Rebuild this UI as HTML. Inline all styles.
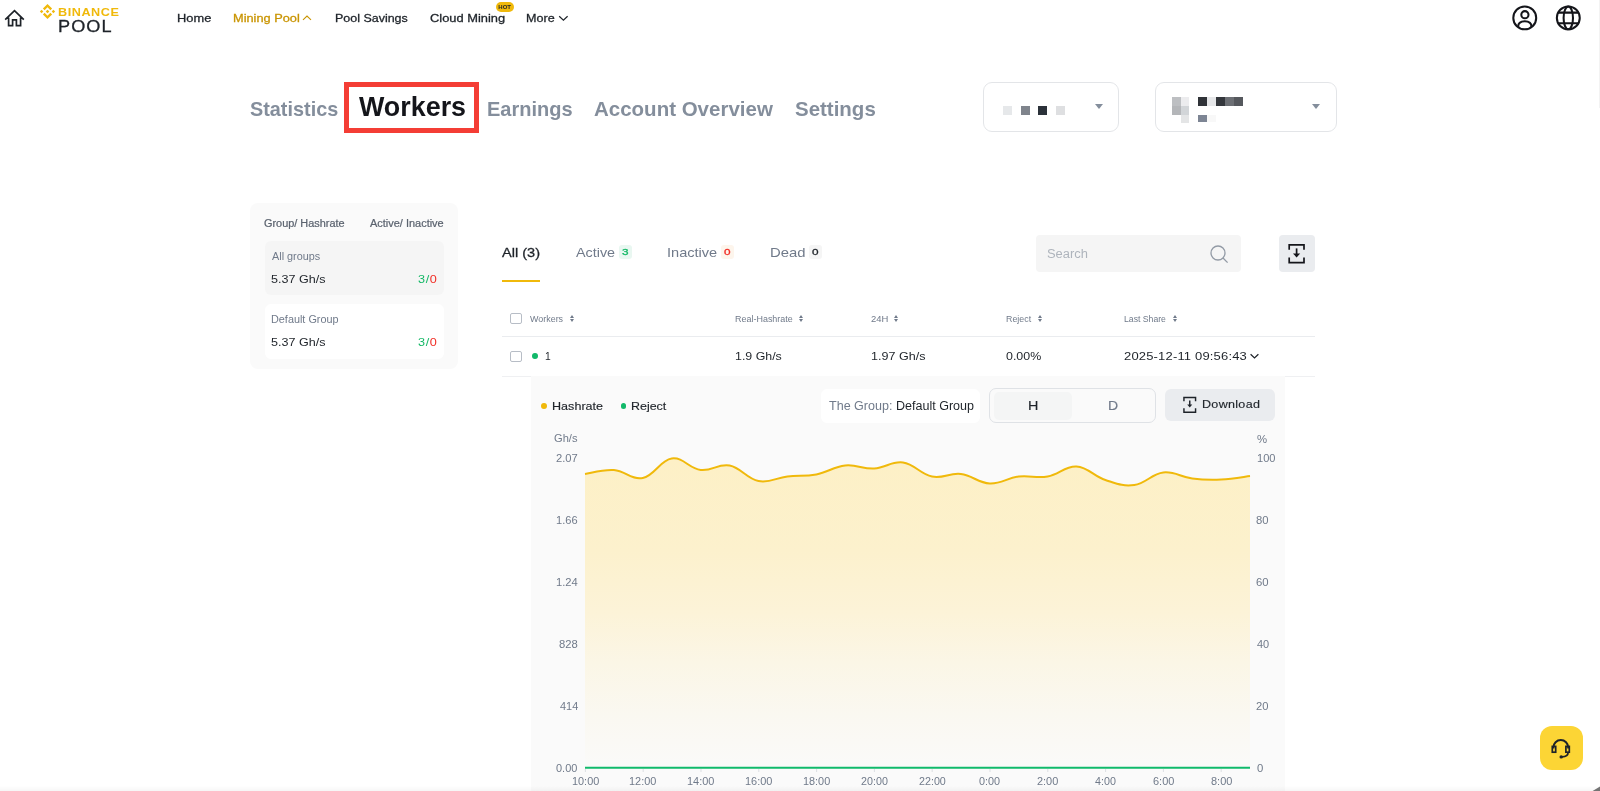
<!DOCTYPE html>
<html lang="en">
<head>
<meta charset="utf-8">
<title>Binance Pool - Workers</title>
<style>
*{box-sizing:border-box;margin:0;padding:0}
html,body{width:1600px;height:791px;overflow:hidden;background:#fff}
body{position:relative;font-family:"Liberation Sans",Arial,sans-serif;color:#1e2329}
.root{position:absolute;left:0;top:0;width:1600px;height:791px;will-change:transform}
.abs{position:absolute;white-space:nowrap}
svg{position:absolute;overflow:visible}
.yl{font-size:10.5px;color:#707a8a;line-height:12px;text-align:right;width:40px;left:537.6px}
.yr{font-size:10.5px;color:#707a8a;line-height:12px;left:1257px}
.xl{font-size:10.5px;color:#707a8a;line-height:12px;top:774.6px;width:40px;text-align:center}
.sort{position:absolute;width:0;height:0;border-left:2.5px solid transparent;border-right:2.500px solid transparent}
.cb{position:absolute;width:11.6px;height:10.6px;border:1px solid #b7bdc6;border-radius:2px;background:#fff}
.m{-webkit-text-stroke:0.25px currentColor}
</style>
</head>
<body>
<div class="root">
<!-- ===== top nav ===== -->
<svg style="left:0;top:0" width="130" height="40" viewBox="0 0 130 40">
  <path d="M5.2 19.6 L14.5 10.6 L23.8 19.6 M8.6 17.4 V25.6 H12.6 V19.8 H16.4 V25.6 H20.6 V17.4" fill="none" stroke="#1e2329" stroke-width="1.7" stroke-linejoin="miter"/>
  <g fill="#f0b90b" transform="translate(47.5 11.5)">
    <path d="M0 -7.6 L4.6 -3 L2.9 -1.3 L0 -4.2 L-2.9 -1.3 L-4.6 -3 Z"/>
    <path d="M0 7.6 L4.6 3 L2.9 1.3 L0 4.2 L-2.9 1.3 L-4.6 3 Z"/>
    <path d="M-7.6 0 L-5.9 -1.7 L-4.2 0 L-5.9 1.7 Z"/>
    <path d="M7.6 0 L5.9 -1.7 L4.2 0 L5.9 1.7 Z"/>
    <path d="M0 -1.8 L1.8 0 L0 1.8 L-1.8 0 Z"/>
  </g>
</svg>
<svg style="left:302px;top:14px" width="10" height="8" viewBox="0 0 10 8"><path d="M1 5.8 L5 2 L9 5.800" fill="none" stroke="#c99400" stroke-width="1.1"/></svg>
<div class="abs" style="left:495.6px;top:2.2px;width:18.2px;height:10px;border-radius:5px;background:#f0b90b"></div>
<div class="abs" id="hot" style="left:495.6px;top:2.2px;width:18.2px;height:10px;color:#1e2329;font-size:6px;line-height:10px;text-align:center;font-weight:700">HOT</div>
<svg style="left:557.6px;top:14px" width="11" height="8" viewBox="0 0 11 8"><path d="M1.2 2.2 L5.4 6.1 L9.6 2.200" fill="none" stroke="#1e2329" stroke-width="1.2"/></svg>

<svg style="left:1510px;top:4px" width="74" height="28" viewBox="0 0 74 28">
  <g fill="none" stroke="#14151a" stroke-width="2.05">
    <circle cx="14.75" cy="13.9" r="11.45"/>
    <circle cx="14.9" cy="10.7" r="3.600"/>
    <path d="M8.1 22.9 C8.100 19.1 10.800 17.300 14.8 17.300 C18.8 17.3 21.500 19.1 21.500 22.900"/>
    <circle cx="58.3" cy="13.9" r="11.45"/>
    <ellipse cx="58.3" cy="13.9" rx="4.7" ry="11.45"/>
    <path d="M47.9 8.600 H68.7 M47.9 19.2 H68.7"/>
  </g>
</svg>

<!-- ===== main tabs ===== -->
<div class="abs" style="left:344px;top:82px;width:135px;height:51px;border:5px solid #f43d35"></div>

<!-- dropdowns -->
<div class="abs" style="left:983px;top:82px;width:136px;height:50px;border:1px solid #e3e5e8;border-radius:9px"></div>
<div class="abs" style="left:1002.5px;top:105.5px;width:9px;height:9px;background:#e6e8ea"></div>
<div class="abs" style="left:1020.5px;top:105.5px;width:9px;height:9px;background:#7f848c"></div>
<div class="abs" style="left:1038px;top:105.5px;width:9px;height:9px;background:#2b3139"></div>
<div class="abs" style="left:1056px;top:105.5px;width:9px;height:9px;background:#dedfe1"></div>
<div class="sort" style="left:1094.5px;top:104px;border-left-width:4px;border-right-width:4px;border-top:5px solid #848e9c"></div>

<div class="abs" style="left:1155px;top:82px;width:182px;height:50px;border:1px solid #e3e5e8;border-radius:9px"></div>
<div class="abs" style="left:1171.5px;top:97px;width:9px;height:9px;background:#bdbfc2"></div>
<div class="abs" style="left:1180.5px;top:97px;width:8.5px;height:9px;background:#ececee"></div>
<div class="abs" style="left:1171.5px;top:106px;width:9px;height:8.5px;background:#b4b6b9"></div>
<div class="abs" style="left:1180.5px;top:106px;width:8.5px;height:8.5px;background:#d2d5d8"></div>
<div class="abs" style="left:1180.5px;top:114.500px;width:8.500px;height:8px;background:#e4e5e6"></div>
<div class="abs" style="left:1198px;top:97px;width:9px;height:8.500px;background:#303338"></div>
<div class="abs" style="left:1207px;top:97px;width:9px;height:8.500px;background:#e6e7e9"></div>
<div class="abs" style="left:1216px;top:97px;width:9px;height:8.500px;background:#34373c"></div>
<div class="abs" style="left:1225px;top:97px;width:9px;height:8.500px;background:#6c6f74"></div>
<div class="abs" style="left:1234px;top:97px;width:8.5px;height:8.500px;background:#55585d"></div>
<div class="abs" style="left:1198px;top:114.500px;width:9px;height:7.5px;background:#7d8594"></div>
<div class="abs" style="left:1207px;top:114.500px;width:9px;height:7.5px;background:#f8f8f8"></div>
<div class="sort" style="left:1311.5px;top:104px;border-left-width:4px;border-right-width:4px;border-top:5px solid #848e9c"></div>

<!-- ===== left panel ===== -->
<div class="abs" style="left:249.8px;top:202.8px;width:208.2px;height:166.6px;background:#fafafa;border-radius:8px"></div>
<div class="abs" style="left:265px;top:241.2px;width:178.8px;height:53.8px;background:#f5f5f5;border-radius:6px"></div>
<div class="abs" style="left:264.6px;top:304.4px;width:179.2px;height:54.4px;background:#fff;border-radius:6px"></div>

<!-- ===== worker tabs ===== -->
<div class="abs" style="left:501.5px;top:280px;width:38px;height:2.4px;background:#f0b90b"></div>
<div class="abs" style="left:618.5px;top:245.3px;width:13.4px;height:14px;border-radius:3px;background:#e9f7f1"></div>
<div class="abs" style="left:721px;top:245.3px;width:13.4px;height:14px;border-radius:3px;background:#fdf5ec"></div>
<div class="abs" style="left:808.6px;top:245.3px;width:13.6px;height:14px;border-radius:3px;background:#f5f5f5"></div>

<!-- search -->
<div class="abs" style="left:1035.5px;top:235.2px;width:205px;height:36.6px;background:#f5f5f5;border-radius:4px"></div>
<svg style="left:1205.5px;top:240.5px" width="24" height="24" viewBox="0 0 24 24"><circle cx="12" cy="12" r="7" fill="none" stroke="#929aa5" stroke-width="1.3"/><path d="M17 17 L21.6 21.600" stroke="#929aa5" stroke-width="1.3"/></svg>
<div class="abs" style="left:1278.7px;top:235.2px;width:36.3px;height:36.6px;background:#eaecef;border-radius:4px"></div>
<svg style="left:1287px;top:243px" width="20" height="22" viewBox="0 0 20 22"><g fill="none" stroke="#14151a" stroke-width="1.700"><path d="M2.2 6.8 V1.8 H17 V6.8"/><path d="M2.2 14.6 V19.6 H17 V14.6"/><path d="M9.6 5.4 V12.6"/></g><path d="M6 10.4 H13.2 L9.6 14.4 Z" fill="#14151a"/></svg>

<!-- ===== table ===== -->
<div class="cb" style="left:510.3px;top:313.1px"></div>
<div class="sort" style="left:570.0px;top:314.8px;border-bottom:3.1px solid #707a8a"></div><div class="sort" style="left:570.0px;top:319.1px;border-top:3.1px solid #707a8a"></div>
<div class="sort" style="left:799.4px;top:314.8px;border-bottom:3.1px solid #707a8a"></div><div class="sort" style="left:799.4px;top:319.1px;border-top:3.1px solid #707a8a"></div>
<div class="sort" style="left:894.4px;top:314.8px;border-bottom:3.1px solid #707a8a"></div><div class="sort" style="left:894.4px;top:319.1px;border-top:3.1px solid #707a8a"></div>
<div class="sort" style="left:1038.0px;top:314.8px;border-bottom:3.1px solid #707a8a"></div><div class="sort" style="left:1038.0px;top:319.1px;border-top:3.1px solid #707a8a"></div>
<div class="sort" style="left:1172.8px;top:314.8px;border-bottom:3.1px solid #707a8a"></div><div class="sort" style="left:1172.8px;top:319.1px;border-top:3.1px solid #707a8a"></div>

<div class="abs" style="left:501.5px;top:335.8px;width:813.5px;height:1px;background:#eaecef"></div>
<div class="cb" style="left:510.3px;top:351px"></div>
<div class="abs" style="left:532.3px;top:353.4px;width:5.8px;height:5.8px;border-radius:50%;background:#12b96a"></div>
<svg style="left:1249px;top:352px" width="11" height="8" viewBox="0 0 11 8"><path d="M1.6 2.2 L5.5 6 L9.400 2.2" fill="none" stroke="#1e2329" stroke-width="1.2"/></svg>
<div class="abs" style="left:501.5px;top:375.900px;width:813.5px;height:1px;background:#eff0f2"></div>

<!-- ===== chart panel ===== -->
<div class="abs" style="left:531.3px;top:376.4px;width:753.8px;height:415px;background:#fafafa"></div>
<div class="abs" style="left:541.3px;top:403px;width:5.8px;height:5.8px;border-radius:50%;background:#f0b90b"></div>
<div class="abs" style="left:620.6px;top:403px;width:5.8px;height:5.8px;border-radius:50%;background:#12b96a"></div>

<div class="abs" style="left:821px;top:388.5px;width:159.3px;height:34.2px;background:#fff;border-radius:6px"></div>
<div class="abs" style="left:989.4px;top:388.1px;width:167.1px;height:34.6px;border:1px solid #dfe2e6;border-radius:7px;background:#fafafa"></div>
<div class="abs" style="left:994.4px;top:391.9px;width:78.1px;height:27.8px;border-radius:5px;background:#f4f5f5"></div>
<div class="abs" style="left:1165px;top:388.7px;width:110px;height:32.5px;background:#eaecef;border-radius:6px"></div>
<svg style="left:1182.4px;top:395.8px" width="15.5" height="17.700" viewBox="0 0 16 18"><g fill="none" stroke="#1e2329" stroke-width="1.5"><path d="M2 5.4 V1.4 H14 V5.4"/><path d="M2 12.400 V16.6 H14 V12.400"/><path d="M8 4.6 V10"/></g><path d="M5.4 8.6 H10.600 L8 11.800 Z" fill="#1e2329"/></svg>

<div class="abs" id="binance" style="left:57.82px;top:6.00px;font-size:11.30px;line-height:13px;letter-spacing:0.477px;transform:scaleX(1.1200);transform-origin:0 0;font-weight:700;color:#f0b90b">BINANCE</div>
<div class="abs" id="pool" style="left:57.70px;top:17.00px;font-size:16.20px;line-height:19px;letter-spacing:0.970px;transform:scaleX(1.1200);transform-origin:0 0;color:#1e2329;-webkit-text-stroke:0.3px #1e2329">POOL</div>
<div class="abs" id="n1" style="left:177.35px;top:11.00px;font-size:11.60px;line-height:14px;letter-spacing:0.000px;transform:scaleX(1.1086);transform-origin:0 0;color:#1e2329;-webkit-text-stroke:0.3px currentColor">Home</div>
<div class="abs" id="n2" style="left:232.69px;top:11.00px;font-size:11.60px;line-height:14px;letter-spacing:0.000px;transform:scaleX(1.1013);transform-origin:0 0;color:#c99400;-webkit-text-stroke:0.3px currentColor">Mining Pool</div>
<div class="abs" id="n3" style="left:334.68px;top:11.00px;font-size:11.60px;line-height:14px;letter-spacing:0.000px;transform:scaleX(1.0755);transform-origin:0 0;color:#1e2329;-webkit-text-stroke:0.3px currentColor">Pool Savings</div>
<div class="abs" id="n4" style="left:429.52px;top:11.00px;font-size:11.60px;line-height:14px;letter-spacing:0.000px;transform:scaleX(1.1100);transform-origin:0 0;color:#1e2329;-webkit-text-stroke:0.3px currentColor">Cloud Mining</div>
<div class="abs" id="n5" style="left:526.31px;top:11.00px;font-size:11.60px;line-height:14px;letter-spacing:0.000px;transform:scaleX(1.0850);transform-origin:0 0;color:#1e2329;-webkit-text-stroke:0.3px currentColor">More</div>
<div class="abs" id="t1" style="left:249.86px;top:97.00px;font-size:20.40px;line-height:24px;letter-spacing:0.000px;transform:scaleX(0.9729);transform-origin:0 0;font-weight:700;color:#848e9c">Statistics</div>
<div class="abs" id="t2" style="left:359.17px;top:91.00px;font-size:27.00px;line-height:32px;letter-spacing:0.000px;transform:scaleX(0.9951);transform-origin:0 0;font-weight:700;color:#14151a">Workers</div>
<div class="abs" id="t3" style="left:487.47px;top:97.00px;font-size:20.40px;line-height:24px;letter-spacing:0.000px;transform:scaleX(0.9814);transform-origin:0 0;font-weight:700;color:#848e9c">Earnings</div>
<div class="abs" id="t4" style="left:594.07px;top:97.00px;font-size:20.40px;line-height:24px;letter-spacing:0.000px;transform:scaleX(1.0051);transform-origin:0 0;font-weight:700;color:#848e9c">Account Overview</div>
<div class="abs" id="t5" style="left:795.14px;top:97.00px;font-size:20.40px;line-height:24px;letter-spacing:0.000px;transform:scaleX(1.0041);transform-origin:0 0;font-weight:700;color:#848e9c">Settings</div>
<div class="abs" id="lp1" style="left:263.87px;top:218.00px;font-size:10.00px;line-height:12px;letter-spacing:0.000px;transform:scaleX(1.0905);transform-origin:0 0;color:#5a626e;-webkit-text-stroke:0.2px currentColor">Group/ Hashrate</div>
<div class="abs" id="lp2" style="left:370.29px;top:218.00px;font-size:10.00px;line-height:12px;letter-spacing:0.000px;transform:scaleX(1.0955);transform-origin:0 0;color:#5a626e;-webkit-text-stroke:0.2px currentColor">Active/ Inactive</div>
<div class="abs" id="lp3" style="left:271.86px;top:251.00px;font-size:10.00px;line-height:12px;letter-spacing:0.000px;transform:scaleX(1.0845);transform-origin:0 0;color:#707a8a">All groups</div>
<div class="abs" id="lp4" style="left:271.25px;top:273.00px;font-size:11.30px;line-height:13px;letter-spacing:0.000px;transform:scaleX(1.1124);transform-origin:0 0;color:#1e2329">5.37 Gh/s</div>
<div class="abs" id="lp5" style="left:417.91px;top:273.00px;font-size:11.30px;line-height:13px;letter-spacing:0.558px;transform:scaleX(1.1200);transform-origin:0 0;color:#14b866">3/<span style="color:#f12c24">0</span></div>
<div class="abs" id="lp6" style="left:271.07px;top:314.00px;font-size:10.00px;line-height:12px;letter-spacing:0.000px;transform:scaleX(1.0846);transform-origin:0 0;color:#707a8a">Default Group</div>
<div class="abs" id="lp7" style="left:271.25px;top:336.00px;font-size:11.30px;line-height:13px;letter-spacing:0.000px;transform:scaleX(1.1124);transform-origin:0 0;color:#1e2329">5.37 Gh/s</div>
<div class="abs" id="lp8" style="left:417.91px;top:336.00px;font-size:11.30px;line-height:13px;letter-spacing:0.558px;transform:scaleX(1.1200);transform-origin:0 0;color:#14b866">3/<span style="color:#f12c24">0</span></div>
<div class="abs" id="w1" style="left:501.50px;top:245.00px;font-size:13.20px;line-height:16px;letter-spacing:0.000px;transform:scaleX(1.1050);transform-origin:0 0;color:#1e2329;-webkit-text-stroke:0.3px currentColor">All (3)</div>
<div class="abs" id="w2" style="left:575.64px;top:245.00px;font-size:13.50px;line-height:16px;letter-spacing:0.000px;transform:scaleX(1.0616);transform-origin:0 0;color:#707a8a">Active</div>
<div class="abs" id="w3" style="left:667.03px;top:245.00px;font-size:13.50px;line-height:16px;letter-spacing:0.000px;transform:scaleX(1.0792);transform-origin:0 0;color:#707a8a">Inactive</div>
<div class="abs" id="w4" style="left:770.25px;top:245.00px;font-size:13.50px;line-height:16px;letter-spacing:0.000px;transform:scaleX(1.0997);transform-origin:0 0;color:#707a8a">Dead</div>
<div class="abs" id="b1" style="left:622.15px;top:247.00px;font-size:9.00px;line-height:11px;letter-spacing:0.000px;transform:scaleX(1.3069);transform-origin:0 0;color:#14b866;-webkit-text-stroke:0.3px currentColor">3</div>
<div class="abs" id="b2" style="left:724.44px;top:247.00px;font-size:9.00px;line-height:11px;letter-spacing:0.000px;transform:scaleX(1.3052);transform-origin:0 0;color:#f12c24;-webkit-text-stroke:0.3px currentColor">0</div>
<div class="abs" id="b3" style="left:812.11px;top:247.00px;font-size:9.00px;line-height:11px;letter-spacing:0.000px;transform:scaleX(1.3052);transform-origin:0 0;color:#1e2329;-webkit-text-stroke:0.3px currentColor">0</div>
<div class="abs" id="srch" style="left:1047.19px;top:247.00px;font-size:12.00px;line-height:14px;letter-spacing:0.000px;transform:scaleX(1.0772);transform-origin:0 0;color:#aeb4bc">Search</div>
<div class="abs" id="h1" style="left:529.91px;top:314.00px;font-size:9.00px;line-height:11px;letter-spacing:0.000px;transform:scaleX(0.9919);transform-origin:0 0;color:#707a8a">Workers</div>
<div class="abs" id="h2" style="left:734.68px;top:314.00px;font-size:9.00px;line-height:11px;letter-spacing:0.000px;transform:scaleX(0.9963);transform-origin:0 0;color:#707a8a">Real-Hashrate</div>
<div class="abs" id="h3" style="left:871.08px;top:314.00px;font-size:9.00px;line-height:11px;letter-spacing:0.000px;transform:scaleX(1.0510);transform-origin:0 0;color:#707a8a">24H</div>
<div class="abs" id="h4" style="left:1006.16px;top:314.00px;font-size:9.00px;line-height:11px;letter-spacing:0.000px;transform:scaleX(0.9834);transform-origin:0 0;color:#707a8a">Reject</div>
<div class="abs" id="h5" style="left:1124.15px;top:314.00px;font-size:9.00px;line-height:11px;letter-spacing:0.000px;transform:scaleX(0.9635);transform-origin:0 0;color:#707a8a">Last Share</div>
<div class="abs" id="d1" style="left:545.04px;top:349.00px;font-size:11.60px;line-height:14px;letter-spacing:0.000px;transform:scaleX(0.8898);transform-origin:0 0;color:#1e2329">1</div>
<div class="abs" id="d2" style="left:735.42px;top:349.00px;font-size:11.60px;line-height:14px;letter-spacing:0.000px;transform:scaleX(1.0680);transform-origin:0 0;color:#1e2329">1.9 Gh/s</div>
<div class="abs" id="d3" style="left:870.65px;top:349.00px;font-size:11.60px;line-height:14px;letter-spacing:0.000px;transform:scaleX(1.0827);transform-origin:0 0;color:#1e2329">1.97 Gh/s</div>
<div class="abs" id="d4" style="left:1006.15px;top:349.00px;font-size:11.60px;line-height:14px;letter-spacing:0.000px;transform:scaleX(1.0707);transform-origin:0 0;color:#1e2329">0.00%</div>
<div class="abs" id="d5" style="left:1123.99px;top:349.00px;font-size:11.60px;line-height:14px;letter-spacing:0.158px;transform:scaleX(1.1200);transform-origin:0 0;color:#1e2329">2025-12-11 09:56:43</div>
<div class="abs" id="lg1" style="left:551.63px;top:400.00px;font-size:11.20px;line-height:13px;letter-spacing:0.030px;transform:scaleX(1.1200);transform-origin:0 0;color:#1e2329;-webkit-text-stroke:0.15px currentColor">Hashrate</div>
<div class="abs" id="lg2" style="left:631.07px;top:400.00px;font-size:11.20px;line-height:13px;letter-spacing:0.000px;transform:scaleX(1.1120);transform-origin:0 0;color:#1e2329;-webkit-text-stroke:0.15px currentColor">Reject</div>
<div class="abs" id="grp" style="left:828.56px;top:399.00px;font-size:12.00px;line-height:14px;letter-spacing:0.000px;transform:scaleX(1.0451);transform-origin:0 0;color:#707a8a">The Group: <span style="color:#1e2329">Default Group</span></div>
<div class="abs" id="hh" style="left:1027.71px;top:399.00px;font-size:12.30px;line-height:15px;letter-spacing:0.000px;transform:scaleX(1.1691);transform-origin:0 0;color:#1e2329;-webkit-text-stroke:0.15px currentColor">H</div>
<div class="abs" id="dd" style="left:1107.72px;top:399.00px;font-size:12.30px;line-height:15px;letter-spacing:0.000px;transform:scaleX(1.1379);transform-origin:0 0;color:#707a8a;-webkit-text-stroke:0.15px currentColor">D</div>
<div class="abs" id="dl" style="left:1201.97px;top:398.00px;font-size:11.20px;line-height:13px;letter-spacing:0.275px;transform:scaleX(1.1200);transform-origin:0 0;color:#1e2329;-webkit-text-stroke:0.15px currentColor">Download</div>
<div class="abs" id="u1" style="left:554.17px;top:432.00px;font-size:10.50px;line-height:13px;letter-spacing:0.000px;transform:scaleX(1.0590);transform-origin:0 0;color:#707a8a">Gh/s</div>
<div class="abs" id="y0" style="left:555.99px;top:452.00px;font-size:10.50px;line-height:13px;letter-spacing:0.000px;transform:scaleX(1.0657);transform-origin:0 0;color:#707a8a">2.07</div>
<div class="abs" id="r0" style="left:1257.06px;top:452.00px;font-size:10.50px;line-height:13px;letter-spacing:0.000px;transform:scaleX(1.0545);transform-origin:0 0;color:#707a8a">100</div>
<div class="abs" id="y1" style="left:556.01px;top:514.00px;font-size:10.50px;line-height:13px;letter-spacing:0.000px;transform:scaleX(1.0550);transform-origin:0 0;color:#707a8a">1.66</div>
<div class="abs" id="r1" style="left:1256.27px;top:514.00px;font-size:10.50px;line-height:13px;letter-spacing:0.000px;transform:scaleX(1.0743);transform-origin:0 0;color:#707a8a">80</div>
<div class="abs" id="y2" style="left:556.01px;top:576.00px;font-size:10.50px;line-height:13px;letter-spacing:0.000px;transform:scaleX(1.0671);transform-origin:0 0;color:#707a8a">1.24</div>
<div class="abs" id="r2" style="left:1255.93px;top:576.00px;font-size:10.50px;line-height:13px;letter-spacing:0.000px;transform:scaleX(1.0799);transform-origin:0 0;color:#707a8a">60</div>
<div class="abs" id="y3" style="left:558.83px;top:638.00px;font-size:10.50px;line-height:13px;letter-spacing:0.000px;transform:scaleX(1.0722);transform-origin:0 0;color:#707a8a">828</div>
<div class="abs" id="r3" style="left:1257.11px;top:638.00px;font-size:10.50px;line-height:13px;letter-spacing:0.000px;transform:scaleX(1.0472);transform-origin:0 0;color:#707a8a">40</div>
<div class="abs" id="y4" style="left:559.84px;top:700.00px;font-size:10.50px;line-height:13px;letter-spacing:0.000px;transform:scaleX(1.0408);transform-origin:0 0;color:#707a8a">414</div>
<div class="abs" id="r4" style="left:1256.13px;top:700.00px;font-size:10.50px;line-height:13px;letter-spacing:0.000px;transform:scaleX(1.0635);transform-origin:0 0;color:#707a8a">20</div>
<div class="abs" id="y5" style="left:556.03px;top:762.00px;font-size:10.50px;line-height:13px;letter-spacing:0.000px;transform:scaleX(1.0449);transform-origin:0 0;color:#707a8a">0.00</div>
<div class="abs" id="r5" style="left:1256.81px;top:762.00px;font-size:10.50px;line-height:13px;letter-spacing:0.000px;transform:scaleX(1.0810);transform-origin:0 0;color:#707a8a">0</div>
<div class="abs" id="pct" style="left:1256.75px;top:433.00px;font-size:10.50px;line-height:13px;letter-spacing:0.000px;transform:scaleX(1.0806);transform-origin:0 0;color:#707a8a">%</div>
<div class="abs" id="x0" style="left:571.96px;top:776.00px;font-size:10.00px;line-height:12px;letter-spacing:0.000px;transform:scaleX(1.0882);transform-origin:0 0;color:#707a8a">10:00</div>
<div class="abs" id="x1" style="left:628.90px;top:776.00px;font-size:10.00px;line-height:12px;letter-spacing:0.000px;transform:scaleX(1.0909);transform-origin:0 0;color:#707a8a">12:00</div>
<div class="abs" id="x2" style="left:687.26px;top:776.00px;font-size:10.00px;line-height:12px;letter-spacing:0.000px;transform:scaleX(1.0934);transform-origin:0 0;color:#707a8a">14:00</div>
<div class="abs" id="x3" style="left:744.84px;top:776.00px;font-size:10.00px;line-height:12px;letter-spacing:0.000px;transform:scaleX(1.0945);transform-origin:0 0;color:#707a8a">16:00</div>
<div class="abs" id="x4" style="left:802.65px;top:776.00px;font-size:10.00px;line-height:12px;letter-spacing:0.000px;transform:scaleX(1.0865);transform-origin:0 0;color:#707a8a">18:00</div>
<div class="abs" id="x5" style="left:860.71px;top:776.00px;font-size:10.00px;line-height:12px;letter-spacing:0.000px;transform:scaleX(1.0727);transform-origin:0 0;color:#707a8a">20:00</div>
<div class="abs" id="x6" style="left:919.04px;top:776.00px;font-size:10.00px;line-height:12px;letter-spacing:0.000px;transform:scaleX(1.0719);transform-origin:0 0;color:#707a8a">22:00</div>
<div class="abs" id="x7" style="left:979.09px;top:776.00px;font-size:10.00px;line-height:12px;letter-spacing:0.000px;transform:scaleX(1.0815);transform-origin:0 0;color:#707a8a">0:00</div>
<div class="abs" id="x8" style="left:1037.32px;top:776.00px;font-size:10.00px;line-height:12px;letter-spacing:0.000px;transform:scaleX(1.0930);transform-origin:0 0;color:#707a8a">2:00</div>
<div class="abs" id="x9" style="left:1095.28px;top:776.00px;font-size:10.00px;line-height:12px;letter-spacing:0.000px;transform:scaleX(1.0724);transform-origin:0 0;color:#707a8a">4:00</div>
<div class="abs" id="x10" style="left:1153.08px;top:776.00px;font-size:10.00px;line-height:12px;letter-spacing:0.000px;transform:scaleX(1.0960);transform-origin:0 0;color:#707a8a">6:00</div>
<div class="abs" id="x11" style="left:1210.77px;top:776.00px;font-size:10.00px;line-height:12px;letter-spacing:0.000px;transform:scaleX(1.0955);transform-origin:0 0;color:#707a8a">8:00</div>


<svg style="left:0;top:0" width="1600" height="791" viewBox="0 0 1600 791">
  <defs><linearGradient id="g" x1="0" y1="458" x2="0" y2="768" gradientUnits="userSpaceOnUse">
    <stop offset="0" stop-color="#fdf0c6"/><stop offset="0.3" stop-color="#fcf1cd"/><stop offset="0.5" stop-color="#fcf3d8"/><stop offset="0.66" stop-color="#fbf6e6"/><stop offset="0.83" stop-color="#faf8f1"/><stop offset="1" stop-color="#fafaf9"/></linearGradient></defs>
  <path d="M585.0 474.0 C590.8 473.2 602.3 469.2 613.9 470.0 C625.5 470.8 631.3 480.3 642.8 478.0 C654.4 475.7 660.2 460.1 671.7 458.5 C683.3 456.9 689.1 468.6 700.7 470.0 C712.2 471.4 718.0 463.3 729.6 465.5 C741.1 467.7 746.9 478.8 758.5 481.0 C770.0 483.2 775.8 477.8 787.4 476.5 C799.0 475.2 804.7 476.7 816.3 474.5 C827.9 472.3 833.7 466.7 845.2 465.5 C856.8 464.3 862.6 469.1 874.1 468.5 C885.7 467.9 891.5 460.9 903.0 462.5 C914.6 464.1 920.4 474.2 932.0 476.5 C943.5 478.8 949.3 472.6 960.9 474.0 C972.4 475.4 978.2 483.0 989.8 483.5 C1001.3 484.0 1007.1 477.9 1018.7 476.5 C1030.3 475.1 1036.0 478.5 1047.6 476.5 C1059.2 474.5 1065.0 465.8 1076.5 466.5 C1088.1 467.2 1093.9 476.3 1105.4 480.0 C1117.0 483.7 1122.8 486.5 1134.3 485.0 C1145.9 483.5 1151.7 473.8 1163.3 472.5 C1174.8 471.2 1180.6 477.1 1192.2 478.5 C1203.7 479.9 1209.5 480.0 1221.1 479.5 C1232.7 479.0 1244.2 476.7 1250.0 476.0 L1250 768 L585 768 Z" fill="url(#g)"/>
  <path d="M585.0 474.0 C590.8 473.2 602.3 469.2 613.9 470.0 C625.5 470.8 631.3 480.3 642.8 478.0 C654.4 475.7 660.2 460.1 671.7 458.5 C683.3 456.9 689.1 468.6 700.7 470.0 C712.2 471.4 718.0 463.3 729.6 465.5 C741.1 467.7 746.9 478.8 758.5 481.0 C770.0 483.2 775.8 477.8 787.4 476.5 C799.0 475.2 804.7 476.7 816.3 474.5 C827.9 472.3 833.7 466.7 845.2 465.5 C856.8 464.3 862.6 469.1 874.1 468.5 C885.7 467.9 891.5 460.9 903.0 462.5 C914.6 464.1 920.4 474.2 932.0 476.5 C943.5 478.8 949.3 472.6 960.9 474.0 C972.4 475.4 978.2 483.0 989.8 483.5 C1001.3 484.0 1007.1 477.9 1018.7 476.5 C1030.3 475.1 1036.0 478.5 1047.6 476.5 C1059.2 474.5 1065.0 465.8 1076.5 466.5 C1088.1 467.2 1093.9 476.3 1105.4 480.0 C1117.0 483.7 1122.8 486.5 1134.3 485.0 C1145.9 483.5 1151.7 473.8 1163.3 472.5 C1174.8 471.2 1180.6 477.1 1192.2 478.5 C1203.7 479.9 1209.5 480.0 1221.1 479.5 C1232.7 479.0 1244.2 476.7 1250.0 476.0" fill="none" stroke="#f0b90b" stroke-width="2" stroke-linejoin="round"/>
  <path d="M585 767.700 H1250" stroke="#10ba6b" stroke-width="2"/>
  <path d="M585.4 769 V772 M643.2 769 V772 M701.0 769 V772 M758.8 769 V772 M816.6 769 V772 M874.4 769 V772 M932.2 769 V772 M990.0 769 V772 M1047.8 769 V772 M1105.6 769 V772 M1163.4 769 V772 M1221.2 769 V772 " stroke="#dcdfe3" stroke-width="1"/>
</svg>

<!-- support button -->
<div class="abs" style="left:1540px;top:726px;width:43px;height:44px;border-radius:12px;background:#fcd535"></div>
<svg style="left:1549px;top:736px" width="24" height="24" viewBox="0 0 24 24"><g fill="none" stroke="#1e2329"><path d="M4.4 12.6 V11.500 A7.4 7.400 0 0 1 19.200 11.5 V12.600" stroke-width="2"/><path d="M19.1 16.4 C19.100 19.4 16.400 20.600 13 20.800" stroke-width="1.7"/><rect x="3.300" y="10.400" width="3.400" height="5.8" stroke-width="1.700"/><rect x="16.9" y="10.400" width="3.400" height="5.8" stroke-width="1.700"/></g><circle cx="12.2" cy="20.9" r="1.7" fill="#1e2329"/></svg>
<svg style="left:1590px;top:781px" width="10" height="10" viewBox="0 0 10 10"><path d="M10 5.400 V10 H2.600 Z" fill="#777"/></svg>
<div class="abs" style="left:1598.7px;top:0;width:1.3px;height:108px;background:#f3f3f3"></div>
<div class="abs" style="left:0;top:786px;width:1600px;height:5px;background:linear-gradient(to bottom,rgba(0,0,0,0),rgba(0,0,0,0.035))"></div>
</div>
</body>
</html>
